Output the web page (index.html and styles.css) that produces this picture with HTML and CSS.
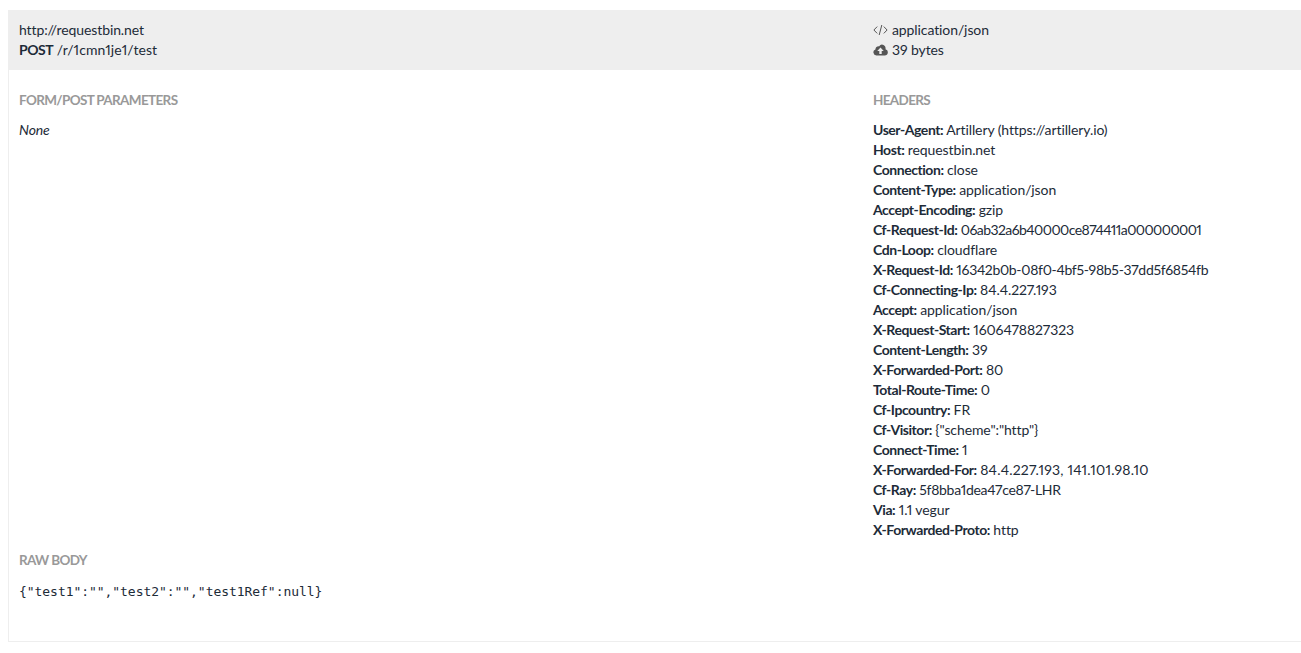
FILE: index.html
```html
<!DOCTYPE html>
<html lang="en">
<head>
<meta charset="utf-8">
<title>RequestBin</title>
<link rel="stylesheet" href="styles.css">
</head>
<body>
<div class="card">
  <div class="meta">
    <div class="col-main">
      <div>http://requestbin.net</div>
      <div><b>POST</b> <span class="path">/r/1cmn1je1/test</span></div>
    </div>
    <div class="col-side">
      <div class="icon-line"><svg class="icon" viewBox="0 0 15 12" aria-hidden="true"><path d="M4.2 2.6 0.9 6l3.3 3.4M10.8 2.6 14.1 6l-3.3 3.4M8.8 1 6.2 11" fill="none" stroke="#555" stroke-width="1"/></svg>application/json</div>
      <div class="icon-line"><svg class="icon" viewBox="0 0 15 12" aria-hidden="true"><path fill-rule="evenodd" d="M3.4 11.4A3.1 3.1 0 0 1 2.4 5.4 3.6 3.6 0 0 1 6.2 2.2 4.2 4.2 0 0 1 8.9 0.6 3.9 3.9 0 0 1 12.5 5.3 3.1 3.1 0 0 1 11.7 11.4ZM7.5 3.6 4.3 7H6.3V10H8.7V7H10.7Z" fill="#555"/></svg>39 bytes</div>
    </div>
  </div>
  <div class="details">
    <div class="col-main">
      <h4 class="label">FORM/POST PARAMETERS</h4>
      <p class="none">None</p>
    </div>
    <div class="col-side">
      <h4 class="label">HEADERS</h4>
      <div class="headers">
        <div><b>User-Agent:</b> Artillery (https://artillery.io)</div>
        <div><b>Host:</b> requestbin.net</div>
        <div><b>Connection:</b> close</div>
        <div><b>Content-Type:</b> application/json</div>
        <div><b>Accept-Encoding:</b> gzip</div>
        <div><b>Cf-Request-Id:</b> <span class="hex">06ab32a6b40000ce874411a000000001</span></div>
        <div><b>Cdn-Loop:</b> cloudflare</div>
        <div><b>X-Request-Id:</b> <span class="uuid">16342b0b-08f0-4bf5-98b5-37dd5f6854fb</span></div>
        <div><b>Cf-Connecting-Ip:</b> 84.4.227.193</div>
        <div><b>Accept:</b> application/json</div>
        <div><b>X-Request-Start:</b> 1606478827323</div>
        <div><b>Content-Length:</b> 39</div>
        <div><b>X-Forwarded-Port:</b> 80</div>
        <div><b>Total-Route-Time:</b> 0</div>
        <div><b>Cf-Ipcountry:</b> FR</div>
        <div><b>Cf-Visitor:</b> {"scheme":"http"}</div>
        <div><b>Connect-Time:</b> 1</div>
        <div><b>X-Forwarded-For:</b> <span class="ips">84.4.227.193, 141.101.98.10</span></div>
        <div><b>Cf-Ray:</b> <span class="uuid">5f8bba1dea47ce87-LHR</span></div>
        <div><b>Via:</b> 1.1 vegur</div>
        <div><b>X-Forwarded-Proto:</b> http</div>
      </div>
    </div>
  </div>
  <div class="raw">
    <h4 class="label raw-label">RAW BODY</h4>
    <pre class="body">{"test1":"","test2":"","test1Ref":null}</pre>
  </div>
</div>
</body>
</html>
```
FILE: styles.css
```css
html, body {
  margin: 0;
  padding: 0;
  background: #fff;
  overflow: hidden;
}
body {
  padding: 10px 0 0 8px;
  font-family: "Lato", "Liberation Sans", sans-serif;
  font-size: 14px;
  line-height: 20px;
  color: #1d2b38;
  letter-spacing: -0.1px;
  font-variant-numeric: proportional-nums;
}
.card {
  box-sizing: border-box;
  height: 632px;
  border: 1px solid #eee;
  border-top: 0;
  border-right: 0;
}
.meta {
  display: flex;
  height: 60px;
  box-sizing: border-box;
  padding: 10px;
  background: #eee;
}
.details {
  display: flex;
  padding: 20px 10px 0;
}
.col-main {
  width: 854px;
  flex: none;
}
.col-side {
  flex: 1;
}
b {
  font-weight: 700;
  letter-spacing: -0.45px;
}
.path {
  letter-spacing: 0.03px;
}
.hex {
  letter-spacing: -0.57px;
}
.uuid {
  letter-spacing: -0.32px;
}
.ips {
  letter-spacing: 0.2px;
}
.icon-line {
  display: flex;
  align-items: center;
}
.icon {
  width: 15px;
  height: 12px;
  margin-right: 4px;
  flex: none;
}
.label {
  margin: 0 0 10px;
  font-size: 13.5px;
  line-height: 20px;
  font-weight: 700;
  letter-spacing: -0.65px;
  color: #999;
}
.raw-label {
  margin-bottom: 12px;
}
.none {
  margin: 0;
  font-style: italic;
}
.raw {
  padding: 10px 10px 0;
}
.body {
  margin: 0;
  font-family: "DejaVu Sans Mono", monospace;
  font-size: 13px;
  letter-spacing: -0.05px;
  line-height: 20px;
  color: #1d2b38;
}
```
